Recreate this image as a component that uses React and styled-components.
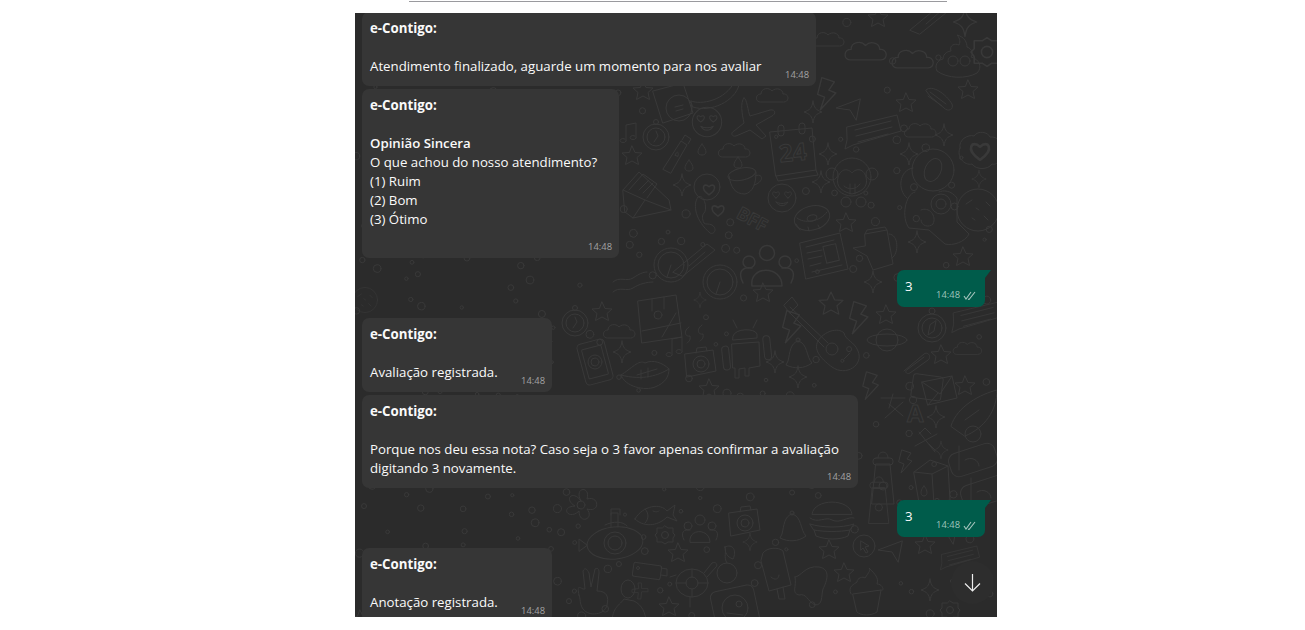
import React from 'react';
import styled, { createGlobalStyle } from 'styled-components';

const Global = createGlobalStyle`
  html, body { margin: 0; padding: 0; background: #fff; overflow: hidden; }
  body { font-family: "Open Sans", "Liberation Sans", sans-serif; }
`;
const Page = styled.div`
  width: 1305px; height: 630px; box-sizing: border-box; padding: 1px 0 0 355px; display: flex; flex-direction: column; align-items: flex-start;
`;
const Rule = styled.hr`
  width: 538px; height: 1px; margin: 0 0 11px 54px; border: 0; background: #9a9a9e; flex: none;
`;
const Chat = styled.section`
  position: relative; width: 642px; height: 604px; background: #2b2b2b; overflow: hidden; flex: none;
`;
const Wallpaper = styled.svg`
  position: absolute; inset: 0; width: 642px; height: 604px;
  fill: none; stroke: #393939; stroke-width: 1; stroke-linejoin: round; stroke-linecap: round;
  text { font-family: "Open Sans", sans-serif; font-weight: 700; }
`;
const Messages = styled.div`
  position: relative; display: flex; flex-direction: column; padding: 0 6px 0 7px; margin-top: -1px;
`;
const Bubble = styled.div`
  position: relative; width: ${p => p.$w}px; box-sizing: border-box; padding: 7px 8px 10px;
  margin-top: ${p => p.$gap}px; border-radius: 7px; background: #363636; color: #fafafa;
  font-size: 13.25px; line-height: 19px;
`;
const Out = styled(Bubble)`
  align-self: flex-end; background: #005c4b; border-radius: 7px 0 7px 7px; margin-right: 6px; padding-bottom: 11px;
  &::after { content: ''; position: absolute; top: 0; right: -6px; border-top: 8px solid #005c4b; border-right: 6px solid transparent; }
`;
const Name = styled.strong` display: block; font-weight: 700; `;
const Title = styled.strong` display: block; font-weight: 600; `;
const Line = styled.div` min-height: 19px; `;
const Time = styled.span`
  position: absolute; right: 7px; bottom: 4px; font-size: 9.4px; line-height: 14px; color: #a3a3a3;
`;
const OutTime = styled(Time)`
  right: 9px; bottom: 5px; color: #9fc4bb; display: flex; align-items: center; gap: 3px;
`;
const Scroll = styled.button`
  position: absolute; right: 3px; bottom: 13px; width: 43px; height: 43px; border: 0; padding: 0 0 1px; border-radius: 50%;
  background: #2d2d2d; display: flex; align-items: center; justify-content: center;
`;
const Checks = () => (
  <svg width="13" height="9" viewBox="0 0 13 9" fill="none" stroke="#a6c5be" strokeWidth="1.1">
    <path d="M1 5l2 3 5-7M5 8l1 .5L12 1" />
  </svg>
);

const heart = 'M0 3C-6-1-3-5 0-2C3-5 6-1 0 3Z';
const K = {
  sparkle: <path d="M0-11C1-4 3-2 9 0C3 2 1 4 0 11C-1 4-3 2-9 0C-3-2-1-4 0-11Z" />,
  star: <path d="M0-10L3-3.5L10-3L5 1.5L6.5 8.5L0 5L-6.5 8.5L-5 1.5L-10-3L-3-3.5Z" />,
  cloud: <path d="M-14 6C-19 6-19-2-13-2C-13-8-5-9-2-5C2-9 9-7 9-2C15-3 16 6 10 6Z" />,
  face: <g><circle r="14" /><path d={heart} transform="translate(-6 -3)" /><path d={heart} transform="translate(6 -3)" /><path d="M-6 4C-3 9 3 9 6 4C2 6-2 6-6 4Z" /></g>,
  plane: <path d="M-6-24C-3-24-2-10 0-6L20-12C26-13 26-8 22-6L6 3L16 14L12 17L0 8L-14 14C-18 15-20 11-16 9L-6 1C-8-8-10-20-6-24Z" />,
  calendar: <g><path d="M-22-20L20-24L24 18L-16 24Z" /><path d="M-16 24L-14 29L26 23L24 18" /><rect x="-14" y="-27" width="6" height="11" rx="3" /><rect x="7" y="-29" width="6" height="11" rx="3" /><text x="-13" y="9" fontSize="24" transform="rotate(-6)">24</text></g>,
  chat: <g><path d="M-26-8L24-20L28-4L-20 10L-28 14L-26 5Z" /><path d="M-18-5L18-14M-17 1L19-8M-15 7L15-1" /></g>,
  envelope: <g><path d="M-24-2L-8-20L22 8L24 18L-14 26L-22 20Z" /><path d="M-24-2L-2 8L24 18M-14 26L-2 8" /><path d="M-18-2L-4-18L10-8L0 6M-8-2L2-12M-4 1L6-9" /></g>,
  watch: <g><circle r="13" /><circle r="9" /><path d="M0-6L2-1L-2 5" /><circle cy="-15" r="2.5" /></g>,
  note: <path d="M-4 8V-8L6-10V5M-4 8A3 2 0 1 1-5 6M6 5A3 2 0 1 1 5 3" />,
  bottle: <g><path d="M-14 16L4-12L10-8L-6 20Z" /><path d="M5-13L8-18L14-14L11-9" /><path d="M-2 2C0-2 2-2 1 3Z" /></g>,
  drop: <path d="M0-6C3-2 4 0 4 2C4 6-4 6-4 2C-4 0-3-2 0-6Z" />,
  heartBall: <g><circle r="13" /><path d={heart} transform="translate(2 3) scale(1.6)" /></g>,
  cup: <g><ellipse cy="-6" rx="14" ry="6" transform="rotate(-12)" /><path d="M-14-4C-12 8-8 14 2 14C10 12 13 4 13-8" /><path d="M12-4C20-8 22 2 11 5" /></g>,
  phone: <g><path d="M-10-18C-16-10-12 6 2 18C6 20 10 14 4 10C0 8-2 10-4 8C-6 4-6 0-4-2C0-6-4-22-10-18Z" /><path d={heart} transform="translate(10 -4) scale(1.7)" /></g>,
  bff: <text fontSize="18" transform="rotate(28)" x="-17" y="6">BFF</text>,
  donut: <g><ellipse rx="18" ry="12" transform="rotate(-15)" /><ellipse rx="5" ry="3" transform="rotate(-15)" /><path d="M-15 0C-8 6 8 4 15-6M-16 6L-12 12M-4 9L-3 13M6 7L8 11" /></g>,
  news: <g><path d="M-22-12L18-22L26 14L-16 24Z" /><path d="M-16-8L12-15M-15-2L0-5M-14 4L0 1M-12 11L-1 8M-10 17L20 10" /><rect x="3" y="-10" width="13" height="17" transform="rotate(-13 9 0)" /></g>,
  jug: <g><path d="M-12-14L10-18L16 16L-4 22L-10 8L-24 0L-12-2Z" /><path d="M12-14C22-14 22 6 15 10" /><path d="M-12-14L-10-18L8-21L10-18" /></g>,
  monkey: <g><circle cy="-5" r="19" /><circle cx="-20" cy="-8" r="6" /><circle cx="20" cy="-8" r="6" /><path d="M-14-5C-10-16 -2-12 0-9C3-13 11-15 14-5C17 6 8 10 0 12C-8 10-17 6-14-5Z" /><path d="M-8 4C-4 8 4 8 8 2M-2 2L-2 12M3 2V12" /><circle cx="-6" cy="20" r="5" /><circle cx="9" cy="20" r="5" /></g>,
  astro: <g><circle cy="-28" r="21" /><ellipse cx="0" cy="-28" rx="8" ry="12" transform="rotate(25 0 -28)" /><path d="M-18-6C-28-4-32 20-24 30L-4 32L12 46C20 48 32 44 36 36L24 24L24 0C18-8 10-8 6-6" /><path d="M-20-30C-34-28-36-8-26 0" /><circle cx="8" cy="6" r="10" /><circle cx="8" cy="6" r="5" /><path d="M-12 12C-4 8 4 18 0 26C-4 30-12 28-12 22" /></g>,
  heartCloud: <g><path d="M-20-4C-22-12-12-18-6-16C-2-22 8-20 10-15C18-16 24-8 20-2C26 4 18 14 12 12C8 18-4 18-8 12C-16 14-24 4-20-4Z" /><path d={heart} transform="translate(0 0) scale(2.6)" /></g>,
  moon: <g><circle r="21" /><path d="M-12-6L-6-10M8-8L12-4M-6 8L-3 10M6 6L10 10M-2-2L1 0" /></g>,
  wheel: <g><circle r="17" /><circle r="13" /><path d="M0 0L-4 12" /></g>,
  bolt: <path d="M-3-11L6-8L2-2L7 0L-4 12L-1 3L-6 1Z" />,
  send: <path d="M12-9L-12 0L2 2L8 12Z" />,
  comet: <g><path d="M-14-8C-8-14 6-4 12 6C14 12 8 14 4 10L-10-2Z" /><path d="M-10-6L6 6M-12-2L2 8" /></g>,
  notepad: <g><path d="M-20-14L10-22L20 8L-10 18Z" /><circle cx="6" cy="3" r="13" /><path d="M2 2L10 0M3 6L10 4" /></g>,
  banana: <path d="M-24 8C-14 12 10 8 20-12L24-8C20 8-4 20-22 14Z" />,
  pill: <g><rect x="-20" y="-5" width="40" height="10" rx="5" transform="rotate(-14)" /><path d="M-10 0C-6-5 2-6 6-6" /></g>,
  map: <g><path d="M-20-14L18-20L24 22L-16 28Z" /><path d="M-16 16L23 8M-6-16V-4M6-18V-6" /><circle cx="0" cy="0" r="4" /><path d="M18-2L4 22" /></g>,
  mobile: <g><rect x="-14" y="-21" width="28" height="42" rx="4" transform="rotate(-15)" /><rect x="-10" y="-15" width="20" height="30" rx="1" transform="rotate(-15)" /><circle r="7" /><circle r="4" /></g>,
  lips: <g><path d="M-24 2C-14-4-6-14 0-10C8-14 18-10 24-4C14 2-2 8-24 2Z" /><path d="M-24 2C-20 14 0 18 10 14C20 10 24 4 24-4M-8 2L12-4M-4-3L-4 6M3-5L3 4" /></g>,
  quote: <path d="M-8-6C-14-2-12 4-7 3C-6 8-9 9-10 10M5-8C-1-4 1 2 6 1C7 6 4 7 3 8" />,
  camera: <g><path d="M-14-9L14-13L17 8L-12 14Z" /><circle cx="2" cy="1" r="8" /><circle cx="2" cy="1" r="4" /><path d="M-3-10L-2-15L7-16L8-12" /></g>,
  android: <g><path d="M-12-6C-10-14 10-14 12-8L12-4L-12-2Z" /><path d="M-8-14L-12-22M8-14L12-22" /><path d="M-13 2L14 0L15 24L4 26V34H0V26L-6 27V36H-10V26L-12 26Z" /><rect x="-24" y="2" width="7" height="24" rx="3.5" transform="rotate(-6)" /><rect x="18" y="-4" width="7" height="24" rx="3.5" transform="rotate(-6)" /></g>,
  guitar: <g><path d="M-32-30L6 6M-34-26L2 10" /><path d="M-38-32L-30-40L-24-32L-32-24Z" /><path d="M-4 4C-10 14 2 24 10 30C24 40 42 28 36 14C32 4 24 4 22-4C16-10 2-6-4 4Z" /><circle cx="10" cy="12" r="6" /><path d="M22 22L28 16" /></g>,
  bell: <g><path d="M0-14C-8-12-8-2-10 6L-12 10C-4 14 6 14 14 8C8 2 10-12 0-14Z" /><circle cy="-15" r="2" /></g>,
  planet: <g><circle r="11" /><ellipse rx="20" ry="6" /></g>,
  compass: <g><circle r="14" /><circle r="10" /><path d="M4-7L2 3L-4 7L-2-3Z" /><circle cy="-17" r="3" /></g>,
  clip: <path d="M-12 8L8-9C12-12 16-6 12-3L-6 10C-10 12-12 8-8 6L8-6" />,
  mails: <g><rect x="-20" y="-12" width="30" height="24" rx="3" transform="rotate(8)" /><path d="M-10-6L20-12L25 10L-4 17Z" /><path d="M-10-6L8 6L20-12M-4 17L6 5" /></g>,
  rocket: <g><path d="M-22 14C-16-6 8-18 24-22C24-2 12 16-8 24Z" /><path d="M-8 8L6-2" /><circle cx="0" cy="22" r="8" /></g>,
  langs: <g><path d="M-12-10H12M0-14L-4 0M-8 10L10-6M-4-4L10 8" /><text x="14" y="14" fontSize="24">A</text></g>,
  cross: <path d="M-8-10L8 10M-12 4L10-8M-8-8L-2-14L4-8M2 2L8 8" />,
  tower: <g><path d="M-6-16H8L12 24H-10Z" /><rect x="-9" y="-22" width="20" height="7" rx="3" /><path d="M-4-22C-4-30 6-30 6-22" /><circle cx="1" cy="6" r="4" /></g>,
  milk: <g><path d="M-16-10L0-22L18-16L20 18L-10 24Z" /><path d="M-16-10L2-8L18-16M2-8L4 22" /><path d="M-6 4C-2 8-2 14-6 14C-10 14-10 8-6 4Z" /></g>,
  capsule: <g><rect x="-24" y="-12" width="48" height="24" rx="8" transform="rotate(-18)" /><path d="M-14-14V10M-8 0C-2-4 6 0 6 6" /></g>,
  flower: <g><circle r="4" /><path d="M0-4C-8-18 10-20 6-6C18-10 20 8 6 4C14 14-2 20-2 6C-12 16-22 2-6 1C-18-6-8-16 0-4Z" /></g>,
  fish: <g><path d="M-18 6C-10-8 8-10 14-2L22-8L20 2L24 8L14 4C4 14-10 14-18 6Z" /><path d="M-8-4C-4 0-4 6-8 10M0-2C4 0 6-2 6-2" /></g>,
  sub: <g><ellipse rx="28" ry="16" transform="rotate(-6)" /><circle r="11" /><circle r="7" /><path d="M-4-16V-30H3V-16M-10-18C-2-22 8-22 12-17M-4-28L-4-34H5V-28" /><path d="M-28 2L-36-4V8Z" /></g>,
  gear: <g><path d="M0-9L3-7L8-7L8-2L10 0L8 3L8 7L3 7L0 9L-3 7L-8 7L-8 3L-10 0L-8-2L-8-7L-3-7Z" /><circle r="3.5" /></g>,
  people: <g><circle cy="-10" r="5" /><circle cx="-12" cy="-4" r="4" /><circle cx="12" cy="-4" r="4" /><path d="M-10 12C-12-2 10-2 10 12ZM-16 10C-20 2-16-1-10 0M16 10C20 2 16-1 10 0" /></g>,
  burger: <g><path d="M-20-4C-18-20 18-20 20-4Z" /><path d="M-22 0C-14 6-6-2 0 2C8 6 16-2 22 0M-22 6C-10 10 10 10 22 6L18 12C8 14-8 14-18 12Z" /><path d="M-18 12L-16 18C-6 22 8 22 16 18L18 12" /></g>,
  arrowBall: <g><circle r="11" /><path d="M-3-5L5 0L1 1L4 6L2 7L-1 2L-3 4Z" /></g>,
  cherry: <g><circle cy="8" r="10" /><path d="M0-2C-4-8 0-14-2-18M-2-18C6-22 10-14 6-6C0-8-2-12-2-18Z" /></g>,
  ice: <g><path d="M-12-20C-8-26 4-26 8-22L16 12L-6 18L-14-12Z" /><path d="M2 16L4 26H10L8 14" /><path d="M-4 4C0 8 4 6 4 2" /></g>,
  blob: <path d="M-18-8C-12-8-8-20 6-18C18-16 14-4 10 4C8 12 10 20 2 20C-6 16-6 8-14 10C-22 8-16 2-18-8Z" />,
  cupcake: <g><path d="M-14 2L14-2L10 20C4 24-6 24-10 20Z" /><path d="M-16 2C-20-6-12-8-10-10C-10-14-4-16-2-14C2-20 4-22 2-24C8-18 12-14 10-8C16-8 18 0 14-2" /></g>,
  turtle: <g><ellipse rx="16" ry="14" /><circle r="6" /><path d="M-6 0L-16 0M6 0H16M0-6V-14M0 6V14" /><path d="M12-10L20-20C24-22 26-18 24-16L15-6M-16-8L-22-6M-2 14V24" /></g>,
  battery: <g><rect x="-14" y="-7" width="28" height="14" rx="2" transform="rotate(8)" /><path d="M14-3L20-2V5L14 4" /><circle cx="-9" cy="-3" r="1.5" /></g>,
  hand: <path d="M-14 0C-16-10-14-8-10-6L-8-6L-10-24C-8-28-6-26-4-22L-2-8L2-26C6-28 6-24 6-22L4-4C14-4 16 2 14 10C12 20-4 22-10 14C-14 8-12 4-14 0Z" />,
  person: <g><ellipse cy="-14" rx="7" ry="9" /><path d="M-16 20C-16 4-8 2-4-4L6-2C14 2 18 10 18 20" /></g>,
  plus: <path d="M-2-10L2-10L2-3L10-3L10 1L2 1L1 10L-3 10L-2 2L-10 2L-10-2L-2-3Z" />,
  poop: <g><path d="M-20 16C-24 8-16 4-14 4C-14-2-8-4-6-4C-8-10 -2-12 2-10C4-14 2-18 0-20C8-18 10-12 10-8C16-6 16 0 14 2C22 4 26 12 20 18C10 24-10 24-20 16Z" /><circle cx="-4" cy="6" r="5" /><circle cx="8" cy="6" r="5" /></g>,
  tag: <g><path d="M-20 10L14-18L22-12L-10 14Z" /><path d="M-4 4L12-10" /></g>,
  capsule2: <g><path d="M-20 4C-14-2-6 4 0 0C6-4 10-6 14-6" /><path d="M-20 14C-14 8-6 14 0 10C6 6 14 4 20 4" /></g>,
  faceSticker: <g><rect x="-22" y="-20" width="44" height="44" rx="6" transform="rotate(-12)" /><circle r="13" /><circle cx="4" cy="-4" r="3" /><path d="M-8 5L8 7" /></g>,
};
const P = [
  ['face',707,122,1.05],['face',782,198,1],['plane',750,122,1],['calendar',792,152,1],['chat',873,135,1],['monkey',852,182,1],['astro',933,198,1],['heartCloud',980,152,1],['moon',978,210],
  ['sparkle',813,112],['sparkle',828,154],['sparkle',821,182],['sparkle',909,154],['sparkle',944,135],['sparkle',979,179,.8],['sparkle',917,242],['sparkle',682,185],
  ['star',632,156],['star',906,103],['star',846,223],['star',963,257],['star',968,90],['star',643,91],['cloud',774,96],['cloud',736,151],['cloud',922,131],['bolt',826,93,1.4],['send',848,108],['comet',940,98,1],
  ['watch',656,137],['note',630,133],['bottle',677,153],['envelope',647,192],['drop',702,150],['drop',689,166],['drop',738,163],['heartBall',707,187],['cup',743,180],['phone',708,215],['bff',753,220],['donut',812,218],['news',822,255],['jug',877,248],['wheel',671,265],['wheel',720,282],['people',767,268,1.5],['notepad',673,105],['banana',715,93],
  ['tag',693,262],['map',658,315],['star',602,312],['watch',575,323],['cloud',621,332],['mobile',595,362],['lips',645,373],['sparkle',622,352],['quote',697,333],['note',676,347],['camera',699,363],['android',745,342],['guitar',822,337],['bell',798,355],['sparkle',775,362],['sparkle',798,377],['sparkle',873,282],['sparkle',700,300,.7],['star',831,304,1.2],['star',763,293],['star',886,315],['star',709,389],['bolt',791,326,1.4],['bolt',858,317,1.4],['bolt',870,385,1.2],['planet',887,340],['capsule2',633,278],
  ['compass',932,328],['chat',977,320,.9],['star',941,355],['cloud',969,349,.9],['clip',916,363],['mails',932,388],['star',965,386],['langs',893,408],['sparkle',936,417],['rocket',973,412],['bolt',905,461],['cross',927,442],['sparkle',941,450,.8],['tower',882,480],['milk',930,482],['capsule',973,460],['capsule',985,492],
  ['flower',581,505],['fish',653,513],['sub',615,543],['gear',665,535],['people',700,530],['camera',743,522],['bell',792,528],['burger',832,518],['sparkle',750,542,.8],['arrowBall',864,546],['send',890,550],['star',829,550],['star',678,553],['star',844,573],['cherry',727,565],['ice',775,573],['blob',813,585],['cupcake',867,592],['turtle',692,583],['battery',647,571],['hand',593,595],['person',628,603],['plus',640,591,.8],['star',669,607],['faceSticker',735,608],['tower',878,502,.9],
  ['poop',957,55],['gear',987,52,1.6],['cloud',915,60,1.3],['cloud',868,52,1.3],['sparkle',965,22,1.3],['star',878,18],['tag',930,20],['sparkle',930,590],['gear',950,610],['star',925,545],['send',945,532],['chat',960,560,.7],['cloud',830,40,1],['moon',365,300,.6],['star',360,620]
];
const dots = (() => {
  const out = []; let s = 17;
  const r = () => (s = (s * 16807) % 2147483647) / 2147483647;
  for (let i = 0; i < 1400 && out.length < 330; i++) {
    const x = 356 + r() * 640, y = 14 + r() * 602;
    if (P.some(p => Math.hypot(p[1] - x, p[2] - y) < 17 * (p[3] || 1))) continue;
    if (out.some(d => Math.hypot(d[0] - x, d[1] - y) < 11)) continue;
    out.push([x, y, 1.5 + r() * 2.6]);
  }
  return out;
})();

const Doodles = () => (
  <Wallpaper viewBox="355 13 642 604" aria-hidden="true">
    {dots.map((d, i) => <circle key={i} cx={d[0]} cy={d[1]} r={d[2]} />)}
    {P.map((p, i) => <g key={i} transform={`translate(${p[1]} ${p[2]}) scale(${p[3] || 1})`}>{K[p[0]]}</g>)}
  </Wallpaper>
);

export default function App() {
  return (
    <Page>
      <Global />
      <Rule />
      <Chat>
        <Doodles />
        <Messages>
          <Bubble $w={454} $gap={0}><Name>e-Contigo:</Name><Line /><Line>Atendimento finalizado, aguarde um momento para nos avaliar</Line><Time>14:48</Time></Bubble>
          <Bubble $w={257} $gap={3}><Name>e-Contigo:</Name><Line /><Title>Opinião Sincera</Title><Line>O que achou do nosso atendimento?</Line><Line>(1) Ruim</Line><Line>(2) Bom</Line><Line>(3) Ótimo</Line><Line /><Time>14:48</Time></Bubble>
          <Out $w={88} $gap={12}><Line>3</Line><OutTime>14:48 <Checks /></OutTime></Out>
          <Bubble $w={190} $gap={11}><Name>e-Contigo:</Name><Line /><Line>Avaliação registrada.</Line><Time>14:48</Time></Bubble>
          <Bubble $w={496} $gap={3}><Name>e-Contigo:</Name><Line /><Line>Porque nos deu essa nota? Caso seja o 3 favor apenas confirmar a avaliação digitando 3 novamente.</Line><Time>14:48</Time></Bubble>
          <Out $w={88} $gap={12}><Line>3</Line><OutTime>14:48 <Checks /></OutTime></Out>
          <Bubble $w={190} $gap={11}><Name>e-Contigo:</Name><Line /><Line>Anotação registrada.</Line><Time>14:48</Time></Bubble>
        </Messages>
        <Scroll aria-label="Rolar para baixo"><svg width="17" height="19" viewBox="0 0 17 19" fill="none" stroke="#eee" strokeWidth="1.2"><path d="M8.5 1v17M1 10.500l7.500 7.500 7.500-7.500"/></svg></Scroll>
      </Chat>
    </Page>
  );
}
